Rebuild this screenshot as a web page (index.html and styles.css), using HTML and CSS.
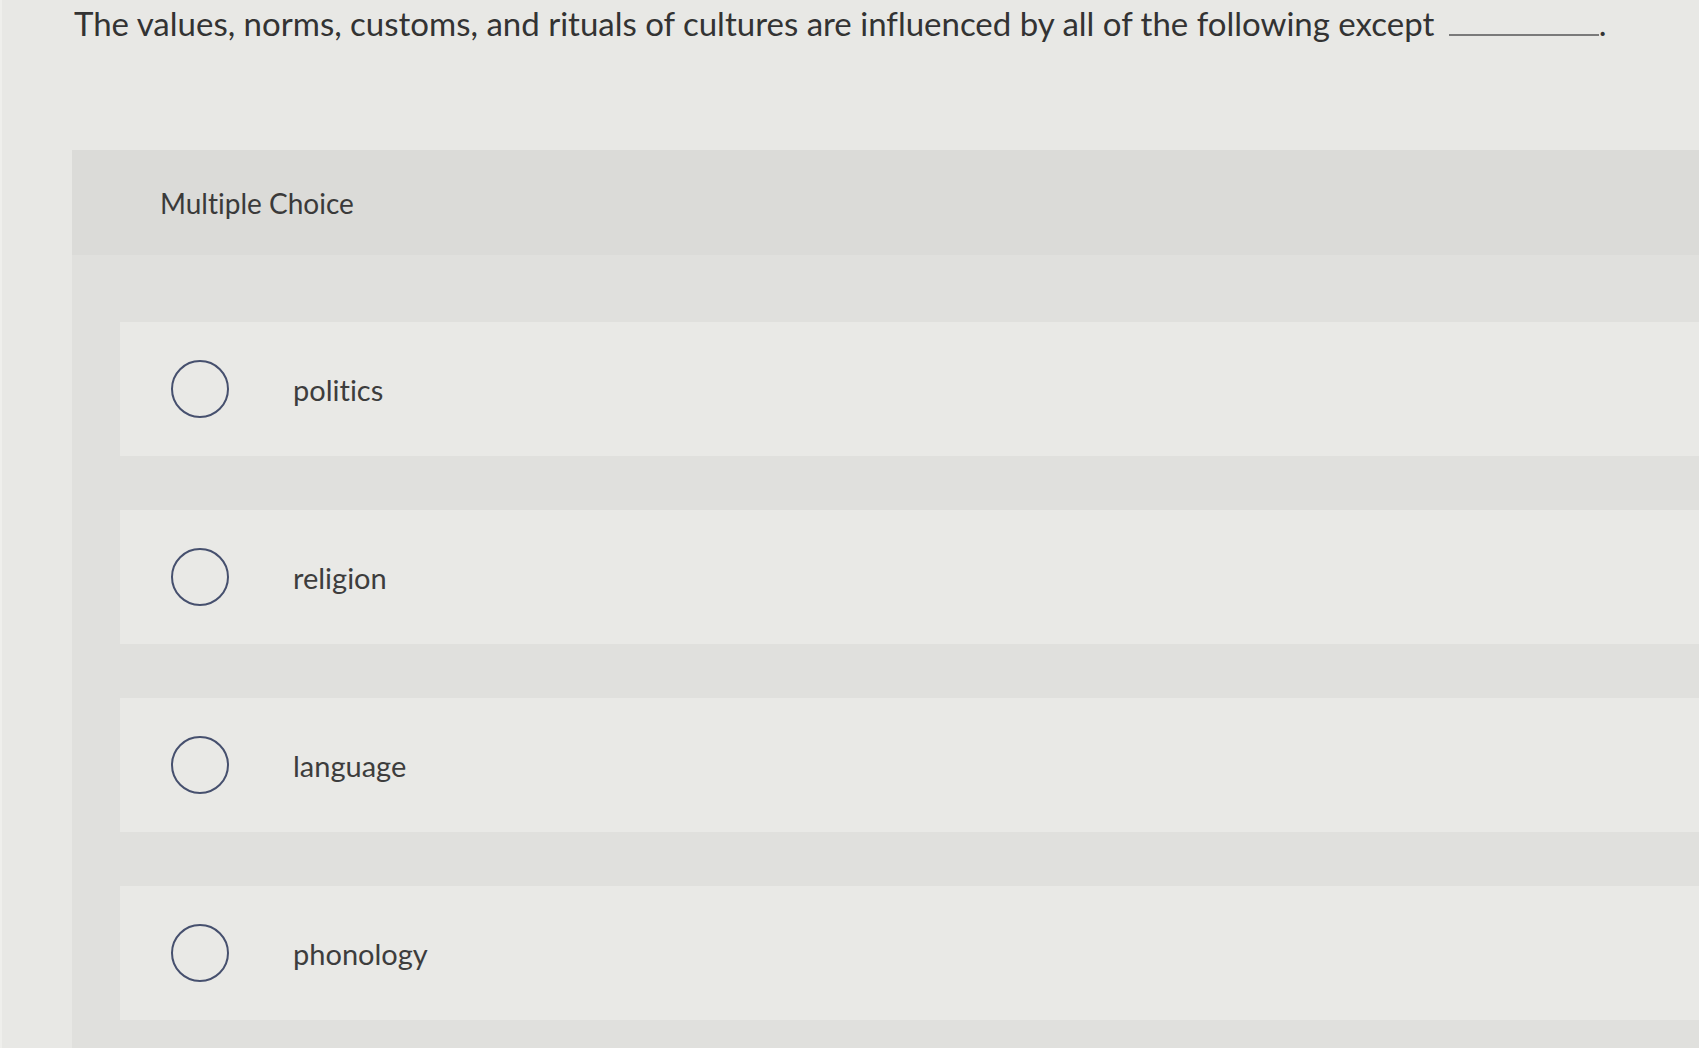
FILE: index.html
```html
<!DOCTYPE html>
<html lang="en">
<head>
<meta charset="utf-8">
<title>Multiple Choice</title>
<link rel="stylesheet" href="styles.css">
</head>
<body>
<div class="page">
  <p class="question">The values, norms, customs, and rituals of cultures are influenced by all of the following except <span class="blank"></span>.</p>
  <section class="panel">
    <header class="panel-head">Multiple Choice</header>
    <div class="panel-body">
      <label class="option"><span class="radio"></span><span class="opt-text">politics</span></label>
      <label class="option"><span class="radio"></span><span class="opt-text">religion</span></label>
      <label class="option"><span class="radio"></span><span class="opt-text">language</span></label>
      <label class="option"><span class="radio"></span><span class="opt-text">phonology</span></label>
    </div>
  </section>
</div>
</body>
</html>
```

FILE: styles.css
```css
html, body {
  margin: 0;
  padding: 0;
  height: 100%;
  overflow: hidden;
}

body {
  background: #e8e8e5;
  font-family: Lato, "Open Sans", "Liberation Sans", sans-serif;
  font-variant-ligatures: none;
  color: #3b3b3b;
}

.page {
  min-height: 100vh;
  box-sizing: border-box;
  padding: 3px 0 0 70px;
  border-left: 2px solid #efefec;
  display: flex;
  flex-direction: column;
}

.question {
  margin: 0 0 0 2px;
  font-size: 33px;
  line-height: 40px;
  color: #333333;
  white-space: nowrap;
}

.blank {
  display: inline-block;
  width: 150px;
  height: 2px;
  background: #7a7a7a;
  margin-left: 6px;
  vertical-align: baseline;
}

.panel {
  margin-top: 107px;
  flex: 1;
  background: #e0e0dd;
  display: flex;
  flex-direction: column;
}

.panel-head {
  height: 105px;
  display: flex;
  align-items: center;
  padding-left: 88px;
  background: #dbdbd8;
  font-size: 28px;
  color: #3a3a3a;
}

.panel-body {
  flex: 1;
  padding: 67px 0 0 48px;
  display: flex;
  flex-direction: column;
  gap: 54px;
}

.option {
  height: 134px;
  display: flex;
  align-items: center;
  padding-left: 51px;
  background: #e9e9e6;
}

.radio {
  width: 54px;
  height: 54px;
  border: 2px solid #46506e;
  border-radius: 50%;
  flex: none;
}

.opt-text {
  margin-left: 64px;
  font-size: 29px;
  color: #3d3d3d;
}
```
